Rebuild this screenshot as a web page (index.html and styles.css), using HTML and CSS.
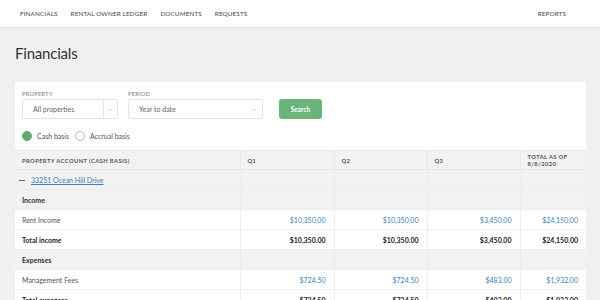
FILE: index.html
```html
<!DOCTYPE html>
<html lang="en">
<head>
    <meta charset="UTF-8">
    <title>Financials</title>
    <link rel="stylesheet" href="styles.css">
</head>
<body>
    <div class="topnav">
        <div class="nav-left">
            <a href="#">Financials</a>
            <a href="#">Rental Owner Ledger</a>
            <a href="#">Documents</a>
            <a href="#">Requests</a>
        </div>
        <a href="#">Reports</a>
    </div>

    <div class="page">
        <h1>Financials</h1>

        <div class="card">
            <div class="filters">
                <div class="field">
                    <label>Property</label>
                    <div class="select property">
                        <span>All properties</span>
                        <span class="arrow">
                            <svg width="5" height="3" viewBox="0 0 5 3"><path d="M0.5 0.5 L2.5 2.5 L4.5 0.5" fill="none" stroke="#bbb" stroke-width="0.8"/></svg>
                        </span>
                    </div>
                </div>
                <div class="field">
                    <label>Period</label>
                    <div class="select period">
                        <span>Year to date</span>
                        <span class="arrow">
                            <svg width="5" height="3" viewBox="0 0 5 3"><path d="M0.5 0.5 L2.5 2.5 L4.5 0.5" fill="none" stroke="#bbb" stroke-width="0.8"/></svg>
                        </span>
                    </div>
                </div>
                <button class="search">Search</button>
            </div>

            <div class="basis">
                <span class="radio checked"></span> Cash basis
                <span class="radio"></span> Accrual basis
            </div>

            <table class="report">
                <colgroup>
                    <col class="c-name">
                    <col class="c-q">
                    <col class="c-q2">
                    <col class="c-q2">
                    <col>
                </colgroup>
                <tr class="head">
                    <th>Property account (cash basis)</th>
                    <th>Q1</th>
                    <th>Q2</th>
                    <th>Q3</th>
                    <th>Total as of<br>8/8/2020</th>
                </tr>
                <tr class="shade">
                    <td><span class="minus"></span><a href="#">33251 Ocean Hill Drive</a></td>
                    <td></td><td></td><td></td><td></td>
                </tr>
                <tr class="shade">
                    <td class="group">Income</td>
                    <td></td><td></td><td></td><td></td>
                </tr>
                <tr>
                    <td>Rent Income</td>
                    <td class="amt">$10,350.00</td>
                    <td class="amt">$10,350.00</td>
                    <td class="amt">$3,450.00</td>
                    <td class="amt">$24,150.00</td>
                </tr>
                <tr class="total">
                    <td>Total income</td>
                    <td>$10,350.00</td>
                    <td>$10,350.00</td>
                    <td>$3,450.00</td>
                    <td>$24,150.00</td>
                </tr>
                <tr class="shade">
                    <td class="group">Expenses</td>
                    <td></td><td></td><td></td><td></td>
                </tr>
                <tr>
                    <td>Management Fees</td>
                    <td class="amt">$724.50</td>
                    <td class="amt">$724.50</td>
                    <td class="amt">$483.00</td>
                    <td class="amt">$1,932.00</td>
                </tr>
                <tr class="total">
                    <td>Total expenses</td>
                    <td>$724.50</td>
                    <td>$724.50</td>
                    <td>$483.00</td>
                    <td>$1,932.00</td>
                </tr>
            </table>
        </div>
    </div>
</body>
</html>
```

FILE: styles.css
```css
body {
    margin: 0;
    font-family: Lato, "Open Sans", sans-serif;
    background-color: #f0f0f0;
    color: #333;
}

a {
    color: inherit;
    text-decoration: none;
}

.topnav {
    height: 27px;
    background-color: #fff;
    display: flex;
    align-items: center;
    justify-content: space-between;
    padding: 0 34px 0 20px;
    box-shadow: 0 1px 2px rgba(0, 0, 0, 0.08);
    font-size: 6.3px;
    text-transform: uppercase;
    letter-spacing: 0.15px;
}

.topnav a {
    color: #444;
}

.nav-left {
    display: flex;
    gap: 13px;
}

.page {
    padding: 16px 14px 0 15px;
}

h1 {
    margin: 0 0 19px 0;
    font-size: 15px;
    font-weight: normal;
    line-height: 20px;
    letter-spacing: -0.2px;
    color: #333;
}

.card {
    background-color: #fff;
    padding-top: 9px;
}

.filters {
    display: flex;
    align-items: flex-end;
    gap: 10px;
    padding: 0 7px;
}

.field label {
    display: block;
    font-size: 5.5px;
    line-height: 7px;
    text-transform: uppercase;
    letter-spacing: 0.4px;
    color: #777;
    margin-bottom: 1px;
}

.select {
    height: 20px;
    box-sizing: border-box;
    border: 1px solid #e4e4e4;
    border-radius: 2px;
    display: flex;
    align-items: center;
    justify-content: space-between;
    font-size: 7px;
    color: #666;
    padding-left: 10px;
}

.select.property {
    width: 96px;
}

.select.period {
    width: 135px;
}

.arrow {
    width: 13px;
    height: 100%;
    display: flex;
    align-items: center;
    justify-content: center;
}

.period .arrow {
    width: 16px;
}

.property .arrow {
    border-left: 1px solid #e4e4e4;
}

.search {
    margin-left: 6px;
    width: 43px;
    height: 20px;
    background-color: #6ab47a;
    color: #fff;
    border: none;
    border-radius: 3px;
    font-family: inherit;
    font-size: 6.5px;
    font-weight: bold;
    padding: 0;
}

.basis {
    display: flex;
    align-items: center;
    padding: 3px 7px 0 7px;
    height: 28px;
    font-size: 7px;
    color: #555;
}

.radio {
    width: 8px;
    height: 8px;
    border: 1px solid #bbb;
    border-radius: 50%;
    margin-right: 5px;
}

.radio.checked {
    background-color: #5fae6e;
    border-color: #5fae6e;
}

.basis .radio:not(.checked) {
    margin-left: 6px;
}

.report {
    width: 100%;
    table-layout: fixed;
    border-collapse: collapse;
    font-size: 7px;
}

.report .c-name { width: 225px; }
.report .c-q { width: 94px; }
.report .c-q2 { width: 93px; }

.report td,
.report th {
    height: 19px;
    padding: 0 8px 0 7px;
    border: 1px solid #eeeeee;
    text-align: right;
    color: #555;
    white-space: nowrap;
}

.report td:first-child,
.report th:first-child {
    text-align: left;
    border-left: none;
}

.report td:last-child,
.report th:last-child {
    border-right: none;
}

.report th {
    height: 18px;
    background-color: #f2f2f2;
    border-color: #e8e8e8;
    font-size: 5.8px;
    font-weight: bold;
    text-transform: uppercase;
    letter-spacing: 0.4px;
    text-align: left;
    line-height: 7px;
}

.report tr.shade td {
    background-color: #f2f2f2;
    border-color: #ececec;
}

.report .group {
    font-weight: bold;
    color: #333;
}

.report .amt {
    color: #3d80b5;
}

.report tr.total td {
    font-weight: bold;
    color: #222;
}

.minus {
    display: inline-block;
    width: 6px;
    height: 1.5px;
    background-color: #666;
    vertical-align: middle;
    margin: 0 6px 0 -3px;
}

.report td a {
    color: #3d80b5;
    text-decoration: underline;
}
```
